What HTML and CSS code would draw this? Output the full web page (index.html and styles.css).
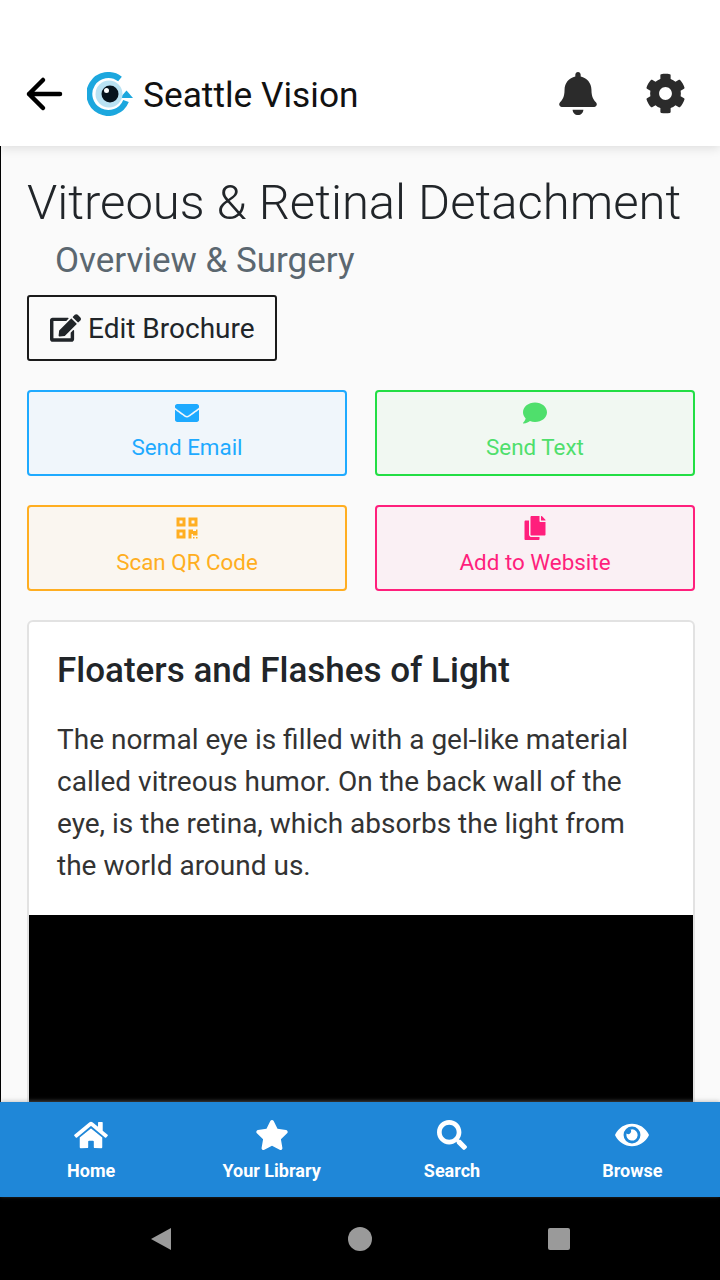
FILE: index.html
```html
<!DOCTYPE html>
<html lang="en">
<head>
    <meta charset="UTF-8">
    <meta name="viewport" content="width=device-width, initial-scale=1.0">
    <link rel="stylesheet" href="styles.css">
    <title>Seattle Vision</title>
</head>
<body>
<div class="app">
    <header class="topbar">
        <svg class="back" viewBox="0 0 38 36"><path d="M35 18H4M18 4L4 18l14 14"/></svg>
        <svg class="logo" viewBox="0 0 46 44">
            <path class="logo-ring" d="M33 7A19 19 0 1 0 39 29"/>
            <path class="logo-arrow" d="M33 26h13l-6.500-7.500z"/>
            <circle class="logo-disc" cx="22" cy="22" r="13.500"/>
            <circle class="logo-pupil" cx="23" cy="22" r="8.500"/>
            <circle class="logo-shine" cx="19.500" cy="18.500" r="2.500"/>
        </svg>
        <span class="brand">Seattle Vision</span>
        <div class="top-actions">
            <svg class="bell" viewBox="0 0 448 512"><path d="M224 512c35.320 0 63.970-28.650 63.970-64H160.030c0 35.350 28.650 64 63.970 64zm215.390-149.710c-19.320-20.760-55.470-51.990-55.470-154.290 0-77.700-54.480-139.900-127.940-155.160V32c0-17.670-14.320-32-31.980-32s-31.980 14.330-31.980 32v20.840C118.560 68.100 64.080 130.300 64.080 208c0 102.300-36.150 133.530-55.470 154.290-6 6.450-8.660 14.160-8.610 21.710.11 16.400 12.980 32 32.100 32h383.800c19.120 0 32-15.600 32.100-32 .05-7.550-2.610-15.270-8.610-21.710z"/></svg>
            <svg class="cog" viewBox="0 0 512 512"><path d="M487.400 315.700l-42.600-24.600c4.300-23.200 4.300-47 0-70.200l42.600-24.600c4.900-2.800 7.100-8.600 5.500-14-11.100-35.600-30-67.800-54.700-94.600-3.800-4.100-10-5.100-14.800-2.300L380.800 110c-17.900-15.400-38.500-27.300-60.800-35.100V25.800c0-5.600-3.900-10.500-9.400-11.700-36.700-8.200-74.300-7.800-109.200 0-5.500 1.200-9.400 6.100-9.400 11.700V75c-22.200 7.900-42.800 19.800-60.800 35.100L88.700 85.500c-4.900-2.800-11-1.900-14.800 2.300-24.700 26.700-43.600 58.900-54.700 94.600-1.700 5.400.6 11.200 5.500 14L67.300 221c-4.300 23.200-4.300 47 0 70.200l-42.600 24.600c-4.900 2.800-7.100 8.600-5.500 14 11.100 35.600 30 67.800 54.700 94.600 3.800 4.100 10 5.100 14.800 2.300l42.600-24.600c17.900 15.400 38.500 27.300 60.800 35.100v49.200c0 5.600 3.900 10.500 9.400 11.700 36.700 8.200 74.300 7.800 109.200 0 5.500-1.200 9.400-6.100 9.400-11.700v-49.200c22.200-7.900 42.800-19.800 60.800-35.100l42.600 24.600c4.900 2.800 11 1.900 14.800-2.300 24.700-26.700 43.600-58.900 54.700-94.600 1.500-5.500-.7-11.300-5.600-14.100zM256 336c-44.100 0-80-35.900-80-80s35.900-80 80-80 80 35.900 80 80-35.900 80-80 80z"/></svg>
        </div>
    </header>

    <main class="content">
        <h1 class="title">Vitreous &amp; Retinal Detachment</h1>
        <h2 class="subtitle">Overview &amp; Surgery</h2>
        <button class="edit-btn">
            <svg viewBox="0 0 576 512"><path d="M402.600 83.200l90.200 90.200c3.800 3.800 3.800 10 0 13.800L274.400 405.600l-92.800 10.300c-12.400 1.400-22.900-9.100-21.500-21.500l10.300-92.800L388.800 83.200c3.800-3.800 10-3.800 13.800 0zm162-22.900l-48.800-48.800c-15.200-15.200-39.900-15.200-55.200 0l-35.400 35.400c-3.800 3.800-3.800 10 0 13.800l90.200 90.200c3.800 3.800 10 3.800 13.800 0l35.400-35.400c15.200-15.300 15.200-40 0-55.200zM384 346.200V448H64V128h229.800c3.200 0 6.200-1.300 8.500-3.500l40-40c7.600-7.600 2.200-20.500-8.500-20.500H48C21.500 64 0 85.500 0 112v352c0 26.500 21.500 48 48 48h352c26.500 0 48-21.500 48-48V306.200c0-10.700-12.900-16-20.500-8.500l-40 40c-2.200 2.300-3.500 5.300-3.500 8.500z"/></svg>
            Edit Brochure
        </button>

        <div class="actions">
            <a class="action blue">
                <svg viewBox="0 0 512 512"><path d="M502.300 190.800c3.900-3.100 9.700-.2 9.700 4.700V400c0 26.500-21.500 48-48 48H48c-26.500 0-48-21.500-48-48V195.600c0-5 5.700-7.800 9.700-4.700 22.400 17.400 52.100 39.500 154.100 113.600 21.100 15.400 56.700 47.800 92.200 47.600 35.700.3 72-32.800 92.300-47.600 102-74.100 131.600-96.300 154-113.700zM256 320c23.200.4 56.600-29.200 73.400-41.400 132.700-96.300 142.800-104.700 173.400-128.700 5.800-4.500 9.200-11.500 9.200-18.900v-19c0-26.500-21.500-48-48-48H48C21.500 64 0 85.500 0 112v19c0 7.400 3.400 14.300 9.200 18.900 30.600 23.900 40.700 32.400 173.400 128.700 16.800 12.200 50.200 41.800 73.400 41.400z"/></svg>
                <span>Send Email</span>
            </a>
            <a class="action green">
                <svg viewBox="0 0 512 512"><path d="M256 32C114.600 32 0 125.100 0 240c0 49.600 21.400 95 57 130.700C44.500 421.100 2.700 466 2.200 466.500c-2.200 2.300-2.800 5.700-1.500 8.700S4.800 480 8 480c66.300 0 116-31.800 140.600-51.400 32.700 12.300 69 19.400 107.400 19.400 141.400 0 256-93.100 256-208S397.400 32 256 32z"/></svg>
                <span>Send Text</span>
            </a>
            <a class="action orange">
                <svg viewBox="0 0 448 512"><path d="M0 224h192V32H0v192zM64 96h64v64H64V96zm192-64v192h192V32H256zm128 128h-64V96h64v64zM0 480h192V288H0v192zm64-128h64v64H64v-64zm352-64h32v128h-96v-32h-32v96h-64V288h96v32h64v-32zm0 160h32v32h-32v-32zm-64 0h32v32h-32v-32z"/></svg>
                <span>Scan QR Code</span>
            </a>
            <a class="action pink">
                <svg viewBox="0 0 448 512"><path d="M320 448v40c0 13.255-10.745 24-24 24H24c-13.255 0-24-10.745-24-24V120c0-13.255 10.745-24 24-24h72v296c0 30.879 25.121 56 56 56h168zm0-344V0H152c-13.255 0-24 10.745-24 24v368c0 13.255 10.745 24 24 24h272c13.255 0 24-10.745 24-24V128H344c-13.200 0-24-10.800-24-24zm120.971-31.029L375.029 7.029A24 24 0 0 0 358.059 0H352v96h96v-6.059a24 24 0 0 0-7.029-16.970z"/></svg>
                <span>Add to Website</span>
            </a>
        </div>

        <section class="card">
            <div class="card-body">
                <h3>Floaters and Flashes of Light</h3>
                <p>The normal eye is filled with a gel-like material called vitreous humor. On the back wall of the eye, is the retina, which absorbs the light from the world around us.</p>
            </div>
            <div class="video"></div>
        </section>
    </main>

    <nav class="tabs">
        <a class="tab">
            <svg viewBox="0 0 576 512"><path d="M280.370 148.260L96 300.110V464a16 16 0 0 0 16 16l112.060-.29a16 16 0 0 0 15.920-16V368a16 16 0 0 1 16-16h64a16 16 0 0 1 16 16v95.640a16 16 0 0 0 16 16.050L464 480a16 16 0 0 0 16-16V300L295.670 148.260a12.190 12.190 0 0 0-15.300 0zM571.600 251.470L488 182.560V44.050a12 12 0 0 0-12-12h-56a12 12 0 0 0-12 12v72.610L318.470 43a48 48 0 0 0-61 0L4.340 251.470a12 12 0 0 0-1.600 16.900l25.500 31A12 12 0 0 0 45.150 301l235.220-193.740a12.190 12.190 0 0 1 15.300 0L530.900 301a12 12 0 0 0 16.900-1.600l25.500-31a12 12 0 0 0-1.700-16.930z"/></svg>
            <span>Home</span>
        </a>
        <a class="tab">
            <svg viewBox="0 0 576 512"><path d="M259.300 17.800L194 150.200 47.900 171.500c-26.200 3.800-36.700 36.100-17.700 54.600l105.700 103-25 145.500c-4.500 26.300 23.200 46 46.400 33.700L288 439.600l130.700 68.700c23.200 12.200 50.900-7.400 46.400-33.700l-25-145.500 105.700-103c19-18.500 8.500-50.800-17.700-54.600L382 150.200 316.700 17.800c-11.700-23.600-45.600-23.900-57.400 0z"/></svg>
            <span>Your Library</span>
        </a>
        <a class="tab">
            <svg viewBox="0 0 512 512"><path d="M505 442.700L405.300 343c-4.500-4.500-10.600-7-17-7H372c27.600-35.300 44-79.700 44-128C416 93.100 322.900 0 208 0S0 93.100 0 208s93.100 208 208 208c48.300 0 92.700-16.400 128-44v16.300c0 6.400 2.500 12.500 7 17l99.700 99.700c9.400 9.400 24.600 9.400 33.900 0l28.300-28.300c9.400-9.400 9.400-24.600.1-34zM208 336c-70.700 0-128-57.200-128-128 0-70.700 57.200-128 128-128 70.700 0 128 57.200 128 128 0 70.700-57.200 128-128 128z"/></svg>
            <span>Search</span>
        </a>
        <a class="tab">
            <svg viewBox="0 0 576 512"><path d="M572.520 241.400C518.290 135.590 410.930 64 288 64S57.680 135.640 3.480 241.410a32.350 32.350 0 0 0 0 29.190C57.710 376.410 165.070 448 288 448s230.320-71.640 284.520-177.410a32.350 32.350 0 0 0 0-29.190zM288 400a144 144 0 1 1 144-144 143.930 143.930 0 0 1-144 144zm0-240a95.310 95.310 0 0 0-25.310 3.790 47.850 47.850 0 0 1-66.900 66.900A95.780 95.780 0 1 0 288 160z"/></svg>
            <span>Browse</span>
        </a>
    </nav>

    <div class="sysbar">
        <svg class="sys-back" viewBox="0 0 22 24"><path d="M21 1v22L1 12z"/></svg>
        <div class="sys-home"></div>
        <div class="sys-recent"></div>
    </div>
</div>
</body>
</html>
```

FILE: styles.css
```css
* {
    box-sizing: border-box;
}

body {
    margin: 0;
    font-family: Roboto, "Liberation Sans", sans-serif;
    background-color: #000;
}

.app {
    display: flex;
    flex-direction: column;
    width: 720px;
    height: 1280px;
    overflow: hidden;
}

/* top bar */
.topbar {
    position: relative;
    z-index: 2;
    flex: 0 0 146px;
    display: flex;
    align-items: center;
    padding: 41px 34px 0 25px;
    background-color: #fff;
    box-shadow: 0 2px 10px rgba(0, 0, 0, 0.12);
}

.back {
    width: 38px;
    height: 36px;
    fill: none;
    stroke: #000;
    stroke-width: 4.500;
    stroke-linecap: round;
    stroke-linejoin: round;
}

.logo {
    width: 46px;
    height: 44px;
    margin-left: 24px;
}

.logo-ring {
    fill: none;
    stroke: #1ca7de;
    stroke-width: 6;
}

.logo-arrow {
    fill: #1ca7de;
}

.logo-disc {
    fill: #b9e2f3;
}

.logo-pupil {
    fill: #07131d;
}

.logo-shine {
    fill: #fff;
}

.brand {
    margin: 2px 0 0 10px;
    font-size: 35.300px;
    color: #111;
}

.top-actions {
    display: flex;
    align-items: center;
    gap: 48px;
    margin-left: auto;
}

.bell {
    width: 38px;
    height: 43px;
    fill: #2b2b2b;
}

.cog {
    width: 41px;
    height: 41px;
    fill: #2b2b2b;
}

/* page body */
.content {
    flex: 1;
    min-height: 0;
    overflow: hidden;
    padding: 29px 25px 0 26px;
    background-color: #fafafa;
    border-left: 1px solid #000;
}

.title {
    margin: 0;
    font-size: 49px;
    font-weight: 300;
    line-height: 56px;
    color: #212529;
    white-space: nowrap;
}

.subtitle {
    margin: 10px 0 14px 28px;
    font-size: 35px;
    font-weight: 400;
    line-height: 40px;
    color: #5b6770;
}

.edit-btn {
    display: flex;
    align-items: center;
    gap: 7px;
    width: 250px;
    height: 66px;
    padding: 0 0 0 21px;
    font-family: inherit;
    font-size: 28px;
    color: #212529;
    background: transparent;
    border: 2px solid #1a1a1a;
    border-radius: 3px;
}

.edit-btn svg {
    width: 31px;
    height: 28px;
    fill: #212529;
}

.actions {
    display: grid;
    grid-template-columns: 320px 320px;
    grid-auto-rows: 86px;
    column-gap: 28px;
    row-gap: 29px;
    margin-top: 29px;
}

.action {
    display: flex;
    flex-direction: column;
    align-items: center;
    padding-top: 9px;
    font-size: 22.400px;
    border: 2px solid;
    border-radius: 4px;
}

.action svg {
    width: 24px;
    height: 24px;
    fill: currentColor;
}

.action span {
    margin-top: 7px;
    line-height: 30px;
}

.blue {
    color: #1eaaff;
    background-color: #f0f6fb;
}

.green {
    color: #4fdf6c;
    border-color: #22de44;
    background-color: #f1f8f2;
}

.orange {
    color: #ffae21;
    background-color: #faf6f0;
}

.pink {
    color: #ff1f7c;
    background-color: #faf0f4;
}

.card {
    margin-top: 29px;
    background-color: #fff;
    border: 2px solid #e2e2e2;
    border-radius: 6px;
    overflow: hidden;
}

.card-body {
    padding: 29px 28px 28px;
}

.card h3 {
    margin: 0;
    font-size: 35px;
    font-weight: 500;
    line-height: 40px;
    color: #212529;
}

.card p {
    margin: 28px 0 0;
    font-size: 28px;
    line-height: 42px;
    color: #333;
}

.video {
    height: 230px;
    background-color: #000;
}

/* bottom tabs */
.tabs {
    position: relative;
    z-index: 2;
    flex: 0 0 95px;
    display: grid;
    grid-template-columns: repeat(4, 180.400px);
    padding-left: 1px;
    background-color: #1f87d8;
    box-shadow: 0 -1px 4px rgba(150, 150, 150, 0.5);
}

.tab {
    display: flex;
    flex-direction: column;
    align-items: center;
    padding-top: 18px;
    color: #fff;
    font-size: 18px;
    font-weight: 700;
}

.tab svg {
    width: 34px;
    height: 30px;
    fill: #fff;
}

.tab span {
    margin-top: 10px;
    line-height: 22px;
}

/* android nav */
.sysbar {
    flex: 0 0 83px;
    display: flex;
    align-items: center;
    background-color: #000;
    padding-left: 150px;
}

.sys-back {
    width: 22px;
    height: 24px;
    fill: #9a9a9a;
}

.sys-home {
    width: 24px;
    height: 24px;
    margin-left: 176px;
    border-radius: 50%;
    background-color: #9a9a9a;
}

.sys-recent {
    width: 22px;
    height: 22px;
    margin-left: 176px;
    border-radius: 2px;
    background-color: #9a9a9a;
}
```
